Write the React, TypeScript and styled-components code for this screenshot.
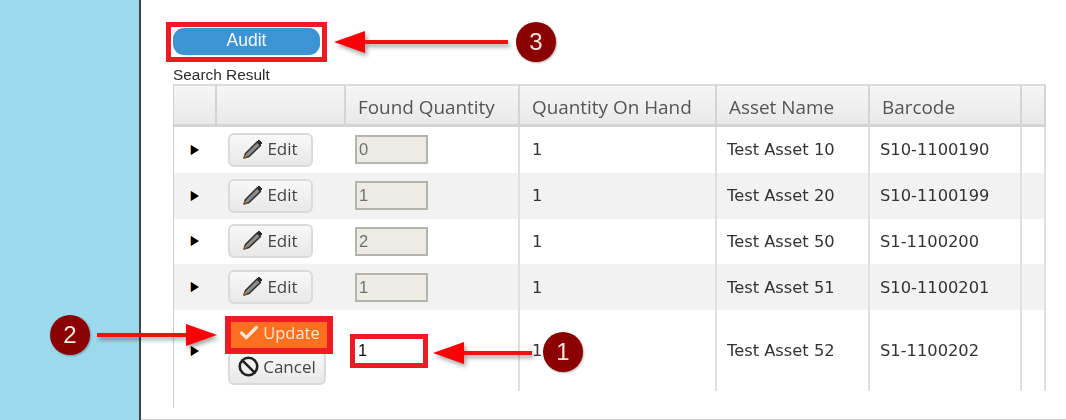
import React from "react";
import styled, { createGlobalStyle } from "styled-components";
import { Ban, Check } from "lucide-react";

type AssetRow = {
  found: string;
  onHand: string;
  name: string;
  barcode: string;
  editing?: boolean;
};

const rows: AssetRow[] = [
  { found: "0", onHand: "1", name: "Test Asset 10", barcode: "S10-1100190" },
  { found: "1", onHand: "1", name: "Test Asset 20", barcode: "S10-1100199" },
  { found: "2", onHand: "1", name: "Test Asset 50", barcode: "S1-1100200" },
  { found: "1", onHand: "1", name: "Test Asset 51", barcode: "S10-1100201" },
  { found: "1", onHand: "1", name: "Test Asset 52", barcode: "S1-1100202", editing: true },
];

const columnWidths = [43, 129, 174, 197, 153, 152, 24];

function Arrow({ left, top, width, flip }: { left: number; top: number; width: number; flip?: boolean }) {
  const tip = flip ? width : 0;
  const base = flip ? width - 31 : 31;
  const tail = flip ? 0 : width;
  return (
    <ArrowSvg $left={left} $top={top} width={width} height={24} viewBox={`0 0 ${width} 24`}>
      <rect x={Math.min(base, tail)} y={10} width={width - 31} height={4} fill="#ee1111" />
      <polygon points={`${tip},12 ${base},1 ${base},23`} fill="#fb0007" />
    </ArrowSvg>
  );
}

function PencilIcon() {
  return (
    <svg width={20} height={20} viewBox="0 0 20 20">
      <polygon points="1,19 2.5,14.5 14,3 17.5,6.5 6,17.5" fill="#8c8c8c" stroke="#33302c" strokeWidth={1.5} strokeLinejoin="round" />
      <polygon points="14.5,2.5 16,1 19,4 17.5,5.5" fill="#2b2b2b" stroke="#2b2b2b" strokeWidth={1} strokeLinejoin="round" />
      <polygon points="1,19 2,15.5 4.5,18" fill="#a8742c" />
    </svg>
  );
}

export default function App() {
  return (
    <Page>
      <GlobalStyle />
      <Sidebar />
      <Main>
        <AuditFrame>
          <AuditButton>Audit</AuditButton>
        </AuditFrame>
        <SearchLabel>Search Result</SearchLabel>
        <TableWrap>
          <Table>
            <colgroup>
              {columnWidths.map((w, i) => (
                <col key={i} width={w} />
              ))}
            </colgroup>
            <thead>
              <tr>
                <HeadCell />
                <HeadCell />
                <HeadCell>Found Quantity</HeadCell>
                <HeadCell>Quantity On Hand</HeadCell>
                <HeadCell>Asset Name</HeadCell>
                <HeadCell>Barcode</HeadCell>
                <HeadCell />
              </tr>
            </thead>
            <tbody>
              {rows.map((row) => (
                <Row key={row.name} $editing={row.editing}>
                  <ExpandCell>
                    <Expander />
                  </ExpandCell>
                  <ActionCell>
                    {row.editing ? (
                      <ActionStack>
                        <UpdateFrame>
                          <UpdateButton>
                            <Check size={22} strokeWidth={3.6} />
                            Update
                          </UpdateButton>
                        </UpdateFrame>
                        <GreyButton $wide>
                          <Ban size={21} strokeWidth={3} color="#222" />
                          Cancel
                        </GreyButton>
                      </ActionStack>
                    ) : (
                      <GreyButton>
                        <PencilIcon />
                        Edit
                      </GreyButton>
                    )}
                  </ActionCell>
                  <QuantityCell>
                    {row.editing ? (
                      <InputFrame>
                        <QuantityInput defaultValue={row.found} />
                      </InputFrame>
                    ) : (
                      <LockedInput value={row.found} readOnly />
                    )}
                  </QuantityCell>
                  <Cell>{row.onHand}</Cell>
                  <Cell>{row.name}</Cell>
                  <Cell>{row.barcode}</Cell>
                  <Cell />
                </Row>
              ))}
            </tbody>
          </Table>
        </TableWrap>
      </Main>

      <Arrow left={334} top={30} width={174} />
      <Badge $x={536} $y={42}>3</Badge>
      <Arrow left={97} top={323} width={120} flip />
      <Badge $x={70} $y={335}>2</Badge>
      <Arrow left={433} top={341} width={99} />
      <Badge $x={563} $y={352}>1</Badge>
    </Page>
  );
}

const GlobalStyle = createGlobalStyle`
  html, body {
    margin: 0;
    background: #fff;
  }
`;

const Page = styled.div`
  position: relative;
  width: 1066px;
  height: 420px;
  display: flex;
  overflow: hidden;
  background: #fff;
  font-family: "DejaVu Sans", Verdana, sans-serif;
  color: #333;
  filter: blur(0.35px);
`;

const Sidebar = styled.aside`
  width: 139px;
  flex: none;
  background: #9bdaec;
  border-right: 2px solid #3c4448;
`;

const Main = styled.main`
  flex: 1;
  box-sizing: border-box;
  padding: 22px 0 0 25px;
  border-bottom: 1px solid #d0d0d0;
`;

const AuditFrame = styled.div`
  box-sizing: border-box;
  width: 161px;
  height: 40px;
  padding: 1px 2px;
  border: 5px solid #ed1c24;
`;

const AuditButton = styled.button`
  display: block;
  width: 100%;
  height: 27px;
  padding: 0 0 2px;
  border: none;
  border-radius: 11px;
  background: #3d94d4;
  color: #f4f8fb;
  font: 17.5px "Liberation Sans", Arial, sans-serif;
`;

const SearchLabel = styled.div`
  height: 22px;
  margin-left: 7px;
  padding-top: 4px;
  box-sizing: border-box;
  font: 15.4px/18px "Liberation Sans", Arial, sans-serif;
  color: #2c2c2c;
`;

const TableWrap = styled.div`
  width: 872px;
  height: 324px;
  margin-left: 7px;
  border-left: 1px solid #cfcfcf;
`;

const Table = styled.table`
  width: 871px;
  table-layout: fixed;
  border-collapse: separate;
  border-spacing: 0;
  font-size: 16.3px;
`;

const HeadCell = styled.th`
  box-sizing: border-box;
  height: 43px;
  padding: 3px 0 0 12px;
  text-align: left;
  font-weight: 400;
  font-size: 18.9px;
  font-family: "Open Sans", "DejaVu Sans", sans-serif;
  color: #555;
  background: linear-gradient(#f6f6f6, #e9e9e9);
  border-top: 2px solid #dcdcdc;
  border-right: 2px solid #d4d4d4;
  border-bottom: 3px solid #d4d4d4;
`;

const Row = styled.tr<{ $editing?: boolean }>`
  height: ${(p) => (p.$editing ? 81 : 45.75)}px;
  &:nth-child(even) td {
    background: #f2f2f2;
  }
`;

const Cell = styled.td`
  box-sizing: border-box;
  padding: 0 0 0 10px;
  border-right: 2px solid #e0e0e0;
  white-space: nowrap;
  &:nth-child(4) {
    padding-left: 12px;
  }
`;

const ExpandCell = styled.td`
  padding: 0 0 0 17px;
`;

const Expander = styled.span`
  display: block;
  width: 0;
  height: 0;
  border-left: 8px solid #000;
  border-top: 5px solid transparent;
  border-bottom: 5px solid transparent;
  filter: drop-shadow(-1px 0 0 rgba(214, 150, 50, 0.7));
`;

const ActionCell = styled.td`
  padding: 0 0 0 11px;
`;

const ActionStack = styled.div`
  display: flex;
  flex-direction: column;
  align-items: flex-start;
`;

const GreyButton = styled.button<{ $wide?: boolean }>`
  display: flex;
  align-items: center;
  justify-content: center;
  gap: 4px;
  box-sizing: border-box;
  width: ${(p) => (p.$wide ? 98 : 85)}px;
  height: 34px;
  margin-top: ${(p) => (p.$wide ? -3 : 0)}px;
  padding: 0 0 ${(p) => (p.$wide ? 3 : 2)}px;
  border: 2px solid #dadada;
  border-radius: 6px;
  background: linear-gradient(#f8f8f8, #e8e8e8);
  color: #444;
  font: 17px "Open Sans", "DejaVu Sans", sans-serif;
`;

const UpdateFrame = styled.div`
  position: relative;
  z-index: 1;
  box-sizing: border-box;
  width: 108px;
  height: 38px;
  margin-left: -3px;
  border: 6px solid #ed1c24;
`;

const UpdateButton = styled.button`
  display: flex;
  align-items: center;
  justify-content: center;
  gap: 3px;
  box-sizing: border-box;
  width: 100%;
  height: 100%;
  padding: 0 0 5px;
  border: none;
  background: #ff6f20;
  color: #fbe6d2;
  font: 16.5px "Open Sans", "DejaVu Sans", sans-serif;
`;

const QuantityCell = styled(Cell)`
  padding-left: 9px;
`;

const LockedInput = styled.input`
  display: block;
  box-sizing: border-box;
  width: 73px;
  height: 29px;
  padding: 0 0 0 2px;
  border: 2px solid #b4b4ac;
  background: #ecece4;
  color: #707070;
  font: 16.5px "Liberation Sans", Arial, sans-serif;
  outline: none;
`;

const InputFrame = styled.div`
  box-sizing: border-box;
  width: 78px;
  height: 34px;
  margin-left: -5px;
  border: 5px solid #ed1c24;
`;

const QuantityInput = styled.input`
  display: block;
  box-sizing: border-box;
  width: 100%;
  height: 100%;
  padding: 0 0 0 3px;
  border: none;
  background: #fff;
  color: #111;
  font: 16.5px "Liberation Sans", Arial, sans-serif;
  outline: none;
`;

const ArrowSvg = styled.svg<{ $left: number; $top: number }>`
  position: absolute;
  left: ${(p) => p.$left}px;
  top: ${(p) => p.$top}px;
  overflow: visible;
  filter: drop-shadow(2px 3px 2px rgba(0, 0, 0, 0.35));
`;

const Badge = styled.div<{ $x: number; $y: number }>`
  position: absolute;
  left: ${(p) => p.$x - 20}px;
  top: ${(p) => p.$y - 20}px;
  width: 40px;
  height: 40px;
  display: flex;
  align-items: center;
  justify-content: center;
  border-radius: 50%;
  background: #8b0000;
  color: #f5e6e6;
  font: 24px "Liberation Sans", Arial, sans-serif;
  box-shadow: 1px 1px 2px rgba(0, 0, 0, 0.3);
`;
